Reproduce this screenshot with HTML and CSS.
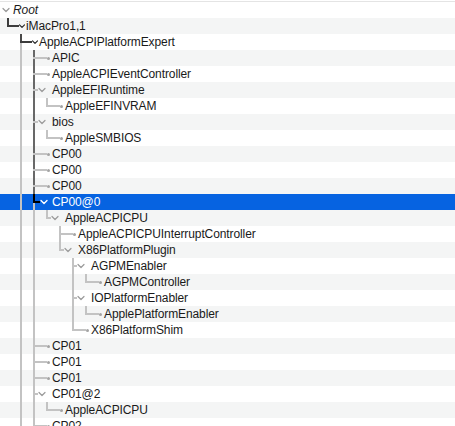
FILE: index.html
```html
<!DOCTYPE html>
<html lang="en">
<head>
<meta charset="utf-8">
<title>IORegistry</title>
<link rel="stylesheet" href="styles.css">
</head>
<body>
<div class="outline">
  <div class="tree">
    <div class="row root"><span class="rj"><svg class="chev" viewBox="0 0 8 6"><path d="M1 1.5 L4 4.5 L7 1.5"/></svg></span><span class="label">Root</span></div>

    <div class="row"><span class="j elbow dk pathnode"><span class="h"></span><svg class="chev" viewBox="0 0 6 6"><path d="M0.5 1.8 L3 4.3 L5.5 1.8"/></svg></span><span class="label">iMacPro1,1</span></div>

    <div class="row"><span class="g"></span><span class="j tee split pathnode"><span class="h"></span><svg class="chev" viewBox="0 0 6 6"><path d="M0.5 1.8 L3 4.3 L5.5 1.8"/></svg></span><span class="label">AppleACPIPlatformExpert</span></div>

    <div class="row"><span class="g"></span><span class="g pipe"></span><span class="j tee dk leaf"><span class="h"></span><span class="dot"></span></span><span class="label">APIC</span></div>

    <div class="row"><span class="g"></span><span class="g pipe"></span><span class="j tee dk leaf"><span class="h"></span><span class="dot"></span></span><span class="label">AppleACPIEventController</span></div>

    <div class="row"><span class="g"></span><span class="g pipe"></span><span class="j tee dk node"><span class="h"></span><svg class="chev" viewBox="0 0 8 6"><path d="M1 1.5 L4 4.5 L7 1.5"/></svg></span><span class="label">AppleEFIRuntime</span></div>

    <div class="row"><span class="g"></span><span class="g pipe"></span><span class="g pipe dk"></span><span class="j elbow leaf"><span class="h"></span><span class="dot"></span></span><span class="label">AppleEFINVRAM</span></div>

    <div class="row"><span class="g"></span><span class="g pipe"></span><span class="j tee dk node"><span class="h"></span><svg class="chev" viewBox="0 0 8 6"><path d="M1 1.5 L4 4.5 L7 1.5"/></svg></span><span class="label">bios</span></div>

    <div class="row"><span class="g"></span><span class="g pipe"></span><span class="g pipe dk"></span><span class="j elbow leaf"><span class="h"></span><span class="dot"></span></span><span class="label">AppleSMBIOS</span></div>

    <div class="row"><span class="g"></span><span class="g pipe"></span><span class="j tee dk leaf"><span class="h"></span><span class="dot"></span></span><span class="label">CP00</span></div>

    <div class="row"><span class="g"></span><span class="g pipe"></span><span class="j tee dk leaf"><span class="h"></span><span class="dot"></span></span><span class="label">CP00</span></div>

    <div class="row"><span class="g"></span><span class="g pipe"></span><span class="j tee dk leaf"><span class="h"></span><span class="dot"></span></span><span class="label">CP00</span></div>

    <div class="row sel"><span class="g"></span><span class="g pipe"></span><span class="j tee split selnode"><span class="h"></span><svg class="chev" viewBox="0 0 8 6"><path d="M1 1.5 L4 4.5 L7 1.5"/></svg></span><span class="label">CP00@0</span></div>

    <div class="row"><span class="g"></span><span class="g pipe"></span><span class="g pipe"></span><span class="j elbow node"><span class="h"></span><svg class="chev" viewBox="0 0 8 6"><path d="M1 1.5 L4 4.5 L7 1.5"/></svg></span><span class="label">AppleACPICPU</span></div>

    <div class="row"><span class="g"></span><span class="g pipe"></span><span class="g pipe"></span><span class="g"></span><span class="j tee leaf"><span class="h"></span><span class="dot"></span></span><span class="label">AppleACPICPUInterruptController</span></div>

    <div class="row"><span class="g"></span><span class="g pipe"></span><span class="g pipe"></span><span class="g"></span><span class="j elbow node"><span class="h"></span><svg class="chev" viewBox="0 0 8 6"><path d="M1 1.5 L4 4.5 L7 1.5"/></svg></span><span class="label">X86PlatformPlugin</span></div>

    <div class="row"><span class="g"></span><span class="g pipe"></span><span class="g pipe"></span><span class="g"></span><span class="g"></span><span class="j tee node"><span class="h"></span><svg class="chev" viewBox="0 0 8 6"><path d="M1 1.5 L4 4.5 L7 1.5"/></svg></span><span class="label">AGPMEnabler</span></div>

    <div class="row"><span class="g"></span><span class="g pipe"></span><span class="g pipe"></span><span class="g"></span><span class="g"></span><span class="g pipe"></span><span class="j elbow leaf"><span class="h"></span><span class="dot"></span></span><span class="label">AGPMController</span></div>

    <div class="row"><span class="g"></span><span class="g pipe"></span><span class="g pipe"></span><span class="g"></span><span class="g"></span><span class="j tee node"><span class="h"></span><svg class="chev" viewBox="0 0 8 6"><path d="M1 1.5 L4 4.5 L7 1.5"/></svg></span><span class="label">IOPlatformEnabler</span></div>

    <div class="row"><span class="g"></span><span class="g pipe"></span><span class="g pipe"></span><span class="g"></span><span class="g"></span><span class="g pipe"></span><span class="j elbow leaf"><span class="h"></span><span class="dot"></span></span><span class="label">ApplePlatformEnabler</span></div>

    <div class="row"><span class="g"></span><span class="g pipe"></span><span class="g pipe"></span><span class="g"></span><span class="g"></span><span class="j elbow leaf"><span class="h"></span><span class="dot"></span></span><span class="label">X86PlatformShim</span></div>

    <div class="row"><span class="g"></span><span class="g pipe"></span><span class="j tee leaf"><span class="h"></span><span class="dot"></span></span><span class="label">CP01</span></div>

    <div class="row"><span class="g"></span><span class="g pipe"></span><span class="j tee leaf"><span class="h"></span><span class="dot"></span></span><span class="label">CP01</span></div>

    <div class="row"><span class="g"></span><span class="g pipe"></span><span class="j tee leaf"><span class="h"></span><span class="dot"></span></span><span class="label">CP01</span></div>

    <div class="row"><span class="g"></span><span class="g pipe"></span><span class="j tee node"><span class="h"></span><svg class="chev" viewBox="0 0 8 6"><path d="M1 1.5 L4 4.5 L7 1.5"/></svg></span><span class="label">CP01@2</span></div>

    <div class="row"><span class="g"></span><span class="g pipe"></span><span class="g pipe"></span><span class="j elbow leaf"><span class="h"></span><span class="dot"></span></span><span class="label">AppleACPICPU</span></div>

    <div class="row"><span class="g"></span><span class="g pipe"></span><span class="j tee leaf"><span class="h"></span><span class="dot"></span></span><span class="label">CP02</span></div>
  </div>
</div>
</body>
</html>
```
FILE: styles.css
```css
* { box-sizing: border-box; }

html, body {
  margin: 0;
  padding: 0;
  background: #ffffff;
  overflow: hidden;
}

body {
  font-family: "Liberation Sans", Arial, sans-serif;
  font-size: 12px;
  letter-spacing: -0.1px;
  color: #1a1a1a;
}

.outline {
  padding-top: 1px;
}

.tree {
  border-top: 1px solid #e4e4e4;
}

.row {
  display: flex;
  align-items: center;
  height: 16px;
  padding-left: 1px;
  white-space: nowrap;
}

.row:nth-child(even) {
  background: #f4f5f5;
}

.row.sel {
  background: #0663e1;
  color: #ffffff;
}

.label {
  line-height: 16px;
  padding-left: 1px;
}

.root .label {
  font-style: italic;
}

/* root disclosure */
.rj {
  width: 11px;
  height: 16px;
  flex: none;
  display: flex;
  align-items: center;
  padding-left: 1px;
}

/* guide cells */
.g {
  width: 13px;
  height: 16px;
  flex: none;
}

.pipe {
  background: linear-gradient(#c3c3c3, #c3c3c3) 6px 0 / 2px 100% no-repeat;
}

.pipe.dk {
  background-image: linear-gradient(#686868, #686868);
}

/* joint: connector column + marker */
.j {
  width: 24px;
  height: 16px;
  flex: none;
  display: flex;
  align-items: center;
}

.j.tee {
  background: linear-gradient(#c3c3c3, #c3c3c3) 6px 0 / 2px 100% no-repeat;
}

.j.tee.dk {
  background-image: linear-gradient(#686868, #686868);
}

.j.tee.split {
  background-image: linear-gradient(to bottom, #4a4a4a 0, #4a4a4a 9px, #c3c3c3 9px, #c3c3c3 100%);
}

.sel .j.tee.split {
  background-image: linear-gradient(to bottom, #000 0, #000 9px, #c3c3c3 9px, #c3c3c3 100%);
}

.j.elbow {
  background: linear-gradient(#c3c3c3, #c3c3c3) 6px 0 / 2px 9px no-repeat;
}

.j.elbow.dk {
  background-image: linear-gradient(#3c3c3c, #3c3c3c);
}

.h {
  height: 2px;
  margin-left: 6px;
  background: #c3c3c3;
  flex: none;
}

.leaf .h { width: 14px; }
.node .h { width: 5px; }
.pathnode .h { width: 12px; background: #3c3c3c; }
.selnode .h { width: 7px; background: #000; }

.dot {
  width: 3px;
  height: 3px;
  border-radius: 50%;
  background: #a4a4a4;
  flex: none;
}

.chev {
  width: 8px;
  height: 6px;
  flex: none;
  fill: none;
  stroke: #9a9a9a;
  stroke-width: 1.2;
  stroke-linecap: round;
  stroke-linejoin: round;
}

.pathnode .chev {
  width: 6px;
  stroke: #2a2a2a;
}

.selnode .chev {
  stroke: #ffffff;
  stroke-width: 1.4;
}
```
